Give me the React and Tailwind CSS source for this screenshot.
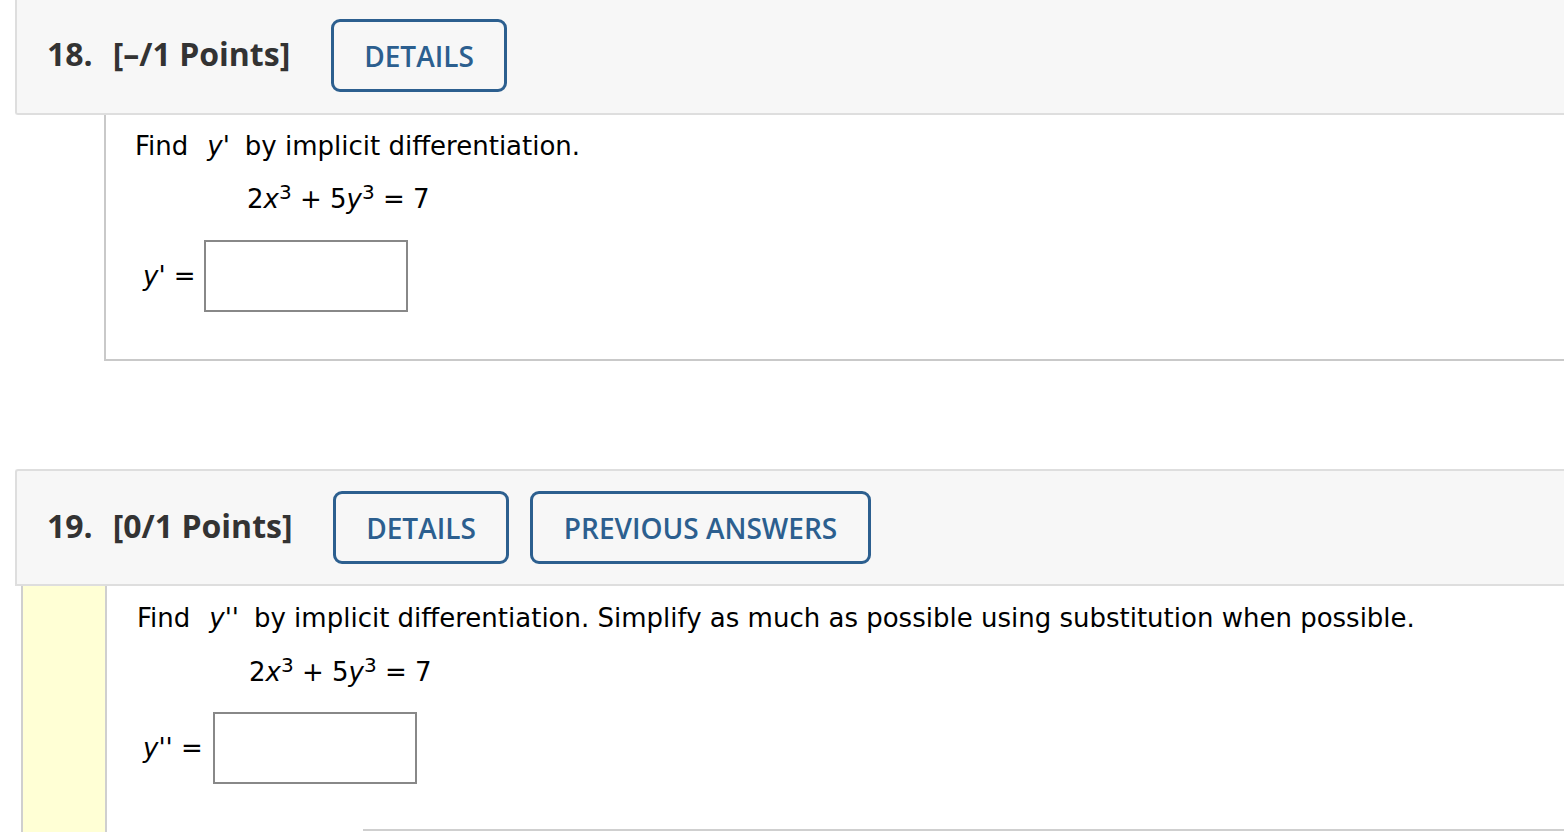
import React from "react";

const headFont = { fontFamily: '"Open Sans", "Liberation Sans", sans-serif' };
const bodyFont = { fontFamily: '"DejaVu Sans", Verdana, sans-serif' };

const OutlineButton = ({ children, className = "" }) => (
  <button
    className={
      "h-[73px] rounded-[9px] border-[3px] border-[#2c5f8f] bg-[#f7f7f7] text-[28px] font-semibold text-[#2c5f8f] " +
      className
    }
    style={headFont}
  >
    {children}
  </button>
);

const Equation = ({ className = "" }) => (
  <div className={"text-[26px] leading-[30px] text-black " + className} style={bodyFont}>
    2<i>x</i>
    <span className="relative -top-[9px] text-[20px]">3</span> + 5<i>y</i>
    <span className="relative -top-[9px] text-[20px]">3</span> = 7
  </div>
);

const AnswerBox = () => <div className="h-[72px] w-[204px] border-2 border-[#888] bg-white" />;

const PointsLabel = ({ num, points, className = "" }) => (
  <div
    className={"ml-[30px] text-[32px] font-bold text-[#333] " + className}
    style={headFont}
  >
    {num}.<span className="ml-[20px]">{points}</span>
  </div>
);

export default function App() {
  return (
    <div className="relative h-[832px] w-[1564px] overflow-hidden bg-white">
      {/* question 18 */}
      <div className="ml-[15px] flex h-[115px] items-center rounded-bl-[3px] border-b-2 border-l-2 border-[#dedede] bg-[#f7f7f7]">
        <PointsLabel num="18" points="[–/1 Points]" className="mb-[6px] w-[284px]" />
        <OutlineButton className="mb-[2px] w-[176px]">DETAILS</OutlineButton>
      </div>
      <div className="ml-[104px] h-[246px] border-b-2 border-l-2 border-[#c9c9c9] pl-[29px] pt-[16px]">
        <div className="text-[26px] leading-[30px] text-black" style={bodyFont}>
          Find<i className="ml-[19px] mr-[15px]">y'</i>by implicit differentiation.
        </div>
        <Equation className="ml-[112px] mt-[23px]" />
        <div className="mt-[24px] flex items-center">
          <span className="ml-[8px] w-[61px] text-[26px]" style={bodyFont}>
            <i>y'</i> =
          </span>
          <AnswerBox />
        </div>
      </div>

      <div className="h-[108px]" />

      {/* question 19 */}
      <div className="ml-[15px] flex h-[117px] items-center rounded-tl-[3px] border-b-2 border-l-2 border-t-2 border-[#dedede] bg-[#f7f7f7]">
        <PointsLabel num="19" points="[0/1 Points]" className="mb-[4px] w-[286px]" />
        <OutlineButton className="w-[176px]">DETAILS</OutlineButton>
        <OutlineButton className="ml-[21px] w-[341px]">PREVIOUS ANSWERS</OutlineButton>
      </div>
      <div className="ml-[21px] flex h-[300px]">
        <div className="w-[86px] border-l-2 border-r-2 border-[#cfcfcf] bg-[#ffffd5]" />
        <div className="flex-1 pl-[30px] pt-[17px]">
          <div className="text-[26px] leading-[30px] text-black" style={bodyFont}>
            Find<i className="ml-[19px] mr-[15px]">y''</i>by implicit differentiation. Simplify as much as possible using substitution when possible.
          </div>
          <Equation className="ml-[112px] mt-[24px]" />
          <div className="mt-[23px] flex items-center">
            <span className="ml-[6px] w-[70px] text-[26px]" style={bodyFont}>
              <i>y''</i> =
            </span>
            <AnswerBox />
          </div>
        </div>
      </div>
      <div className="absolute bottom-[1px] left-[363px] right-0 h-[2px] bg-[#cfcfcf]" />
    </div>
  );
}
